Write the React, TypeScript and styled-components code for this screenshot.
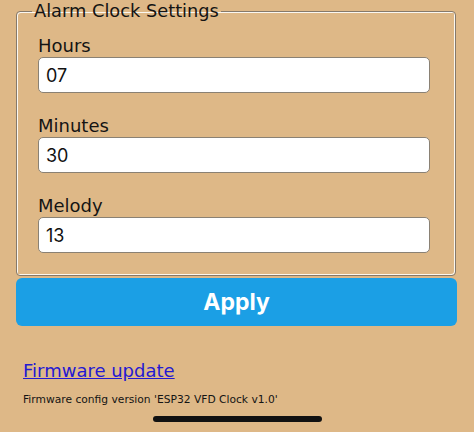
import * as React from 'react';
import styled, { createGlobalStyle } from 'styled-components';

const GlobalStyle = createGlobalStyle`
  html, body {
    margin: 0;
    padding: 0;
    background: #deb887;
  }
  body {
    font-family: 'DejaVu Sans', Verdana, sans-serif;
    color: #141414;
  }
`;

interface Field {
  id: string;
  label: string;
  value: string;
}

const fields: Field[] = [
  { id: 'hours', label: 'Hours', value: '07' },
  { id: 'minutes', label: 'Minutes', value: '30' },
  { id: 'melody', label: 'Melody', value: '13' },
];

const App: React.FC = () => {
  return (
    <>
      <GlobalStyle />
      <Page>
        <Settings>
          <Legend>Alarm Clock Settings</Legend>
          {fields.map((field) => (
            <Row key={field.id}>
              <Label htmlFor={field.id}>{field.label}</Label>
              <Input id={field.id} defaultValue={field.value} />
            </Row>
          ))}
        </Settings>
        <ApplyButton type="button">Apply</ApplyButton>
        <Footer>
          <UpdateLink href="#update">Firmware update</UpdateLink>
          <Version>Firmware config version 'ESP32 VFD Clock v1.0'</Version>
        </Footer>
      </Page>
      <HomeIndicator />
    </>
  );
};

const Page = styled.div`
  display: flex;
  flex-direction: column;
  padding: 0 17px 0 16px;
`;

const Settings = styled.fieldset`
  display: flex;
  flex-direction: column;
  gap: 22px;
  margin: 0 1px 0 0;
  padding: 13px 25px 22px 21px;
  border: 1px solid #85796b;
  box-shadow: inset 1px 1px 0 #fbf7f0, inset -1px -1px 0 #fbf7f0;
  border-radius: 4px;
  min-width: 0;
`;

const Legend = styled.legend`
  padding: 0 2px;
  margin-left: -6px;
  font-size: 17.8px;
  line-height: 22px;
`;

const Row = styled.div`
  display: flex;
  flex-direction: column;
`;

const Label = styled.label`
  font-size: 18px;
  line-height: 22px;
`;

const Input = styled.input`
  box-sizing: border-box;
  width: 100%;
  height: 36px;
  margin: 0;
  padding: 0 0 0 7px;
  text-indent: 0;
  background: #fff;
  border: 1px solid #8a8174;
  border-radius: 5px;
  font-family: Inter, 'Liberation Sans', sans-serif;
  font-size: 18px;
  color: #111;
  outline: none;
`;

const ApplyButton = styled.button`
  height: 48px;
  margin-top: 2px;
  border: none;
  border-radius: 6px;
  background: #1b9fe5;
  color: #fff;
  font-family: Inter, 'Liberation Sans', sans-serif;
  font-weight: 700;
  font-size: 23px;
  cursor: pointer;
`;

const Footer = styled.div`
  display: flex;
  flex-direction: column;
  gap: 11px;
  padding: 34px 0 0 7px;
`;

const UpdateLink = styled.a`
  align-self: flex-start;
  font-size: 18px;
  line-height: 22px;
  color: #2419d2;
  text-decoration: underline;
`;

const Version = styled.div`
  font-size: 10.7px;
  line-height: 14px;
`;

const HomeIndicator = styled.div`
  position: fixed;
  left: 153px;
  top: 416px;
  width: 169px;
  height: 6px;
  border-radius: 3px;
  background: #111;
`;

export default App;
